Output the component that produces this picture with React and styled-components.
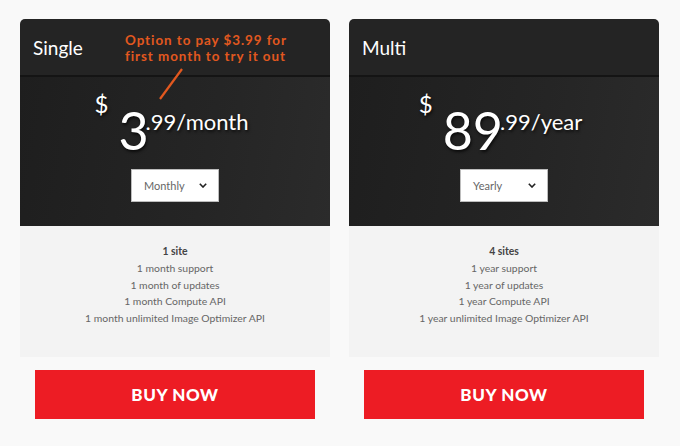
import React from 'react';
import styled, { createGlobalStyle } from 'styled-components';

const GlobalStyle = createGlobalStyle`
  html, body {
    margin: 0;
    padding: 0;
    background: #f9f9f9;
  }
  body {
    font-family: Lato, "Open Sans", sans-serif;
  }
`;

const plans = [
  {
    name: 'Single',
    whole: '3',
    cents: '.99/month',
    period: 'Monthly',
    features: ['1 site', '1 month support', '1 month of updates', '1 month Compute API', '1 month unlimited Image Optimizer API'],
    note: ['Option to pay $3.99 for', 'first month to try it out']
  },
  {
    name: 'Multi',
    whole: '89',
    cents: '.99/year',
    period: 'Yearly',
    features: ['4 sites', '1 year support', '1 year of updates', '1 year Compute API', '1 year unlimited Image Optimizer API']
  }
];

const Chevron = () => (
  <svg width="8" height="5" viewBox="0 0 8 5">
    <polyline points="0.8,0.8 4,4 7.2,0.8" fill="none" stroke="#222" strokeWidth="1.6" />
  </svg>
);

function PlanCard({ plan }) {
  return (
    <Column>
      <Card>
        <Header>
          <Title>{plan.name}</Title>
          {plan.note && (
            <Note>
              {plan.note.map(line => (
                <NoteLine key={line}>{line}</NoteLine>
              ))}
            </Note>
          )}
        </Header>
        <Body>
          {plan.note && (
            <Pointer width="30" height="34" viewBox="0 0 30 34">
              <line x1="24" y1="1" x2="2" y2="31" stroke="#e2581f" strokeWidth="2.2" />
            </Pointer>
          )}
          <Price>
            <Dollar>$</Dollar>
            <Whole>{plan.whole}</Whole>
            <Cents>{plan.cents}</Cents>
          </Price>
          <Select>
            <span>{plan.period}</span>
            <Chevron />
          </Select>
        </Body>
        <Features>
          {plan.features.map((f, i) => (
            <Feature key={f} bold={i === 0}>{f}</Feature>
          ))}
        </Features>
      </Card>
      <BuyButton>BUY NOW</BuyButton>
    </Column>
  );
}

export default function App() {
  return (
    <>
      <GlobalStyle />
      <Page>
        {plans.map(p => (
          <PlanCard key={p.name} plan={p} />
        ))}
      </Page>
    </>
  );
}

const Page = styled.div`
  display: flex;
  gap: 19px;
  padding: 19px 20px 0 20px;
  height: 446px;
  box-sizing: border-box;
`;

const Column = styled.div`
  width: 310px;
  display: flex;
  flex-direction: column;
`;

const Card = styled.div`
  display: flex;
  flex-direction: column;
`;

const Header = styled.div`
  position: relative;
  display: flex;
  align-items: flex-start;
  height: 58px;
  box-sizing: border-box;
  padding: 17px 0 0 13px;
  background: #242424;
  border-radius: 5px 5px 0 0;
  border-bottom: 2px solid #141414;
`;

const Title = styled.div`
  color: #fff;
  font-size: 19px;
  line-height: 24px;
`;

const Note = styled.div`
  position: absolute;
  left: 105px;
  top: 13px;
  font-family: Lato, sans-serif;
  font-weight: 700;
  font-size: 13.4px;
  letter-spacing: 0.95px;
  color: #e2581f;
  white-space: nowrap;
`;

const NoteLine = styled.div`
  line-height: 16.2px;
  height: 16.2px;
`;

const Body = styled.div`
  position: relative;
  height: 149px;
  box-sizing: border-box;
  padding-top: 15px;
  background: linear-gradient(100deg, #1e1e1e 0%, #252525 60%, #2b2b2b 100%);
  display: flex;
  flex-direction: column;
  align-items: center;
`;

const Pointer = styled.svg`
  position: absolute;
  left: 138px;
  top: -9px;
`;

const Price = styled.div`
  display: flex;
  align-items: flex-start;
  color: #fff;
  text-shadow: 1px 2px 3px rgba(0, 0, 0, 0.7);
  height: 62px;
  padding-right: 7px;
`;

const Dollar = styled.span`
  font-size: 24px;
  line-height: 24px;
  margin-right: 10px;
`;

const Whole = styled.span`
  font-size: 52px;
  line-height: 52px;
  margin-top: 12px;
`;

const Cents = styled.span`
  font-size: 22px;
  line-height: 22px;
  margin-top: 19px;
  margin-left: -3px;
`;

const Select = styled.div`
  margin-top: 15px;
  width: 88px;
  height: 33px;
  box-sizing: border-box;
  background: #fff;
  border: 1px solid #bdbdbd;
  display: flex;
  align-items: center;
  justify-content: space-between;
  padding: 0 11px 0 12px;
  font-size: 11px;
  color: #666;
`;

const Features = styled.div`
  height: 131px;
  box-sizing: border-box;
  padding-top: 17px;
  background: #f3f3f3;
  display: flex;
  flex-direction: column;
  align-items: center;
`;

const Feature = styled.div`
  font-size: 10.4px;
  line-height: 16.8px;
  color: ${p => (p.bold ? '#444' : '#666')};
  font-weight: ${p => (p.bold ? 700 : 400)};
`;

const BuyButton = styled.button`
  margin: 13px 15px 0 15px;
  height: 49px;
  border: none;
  background: #ed1c24;
  color: #fff;
  font-family: Lato, sans-serif;
  font-weight: 900;
  font-size: 17px;
  letter-spacing: 0.6px;
  cursor: pointer;
`;
